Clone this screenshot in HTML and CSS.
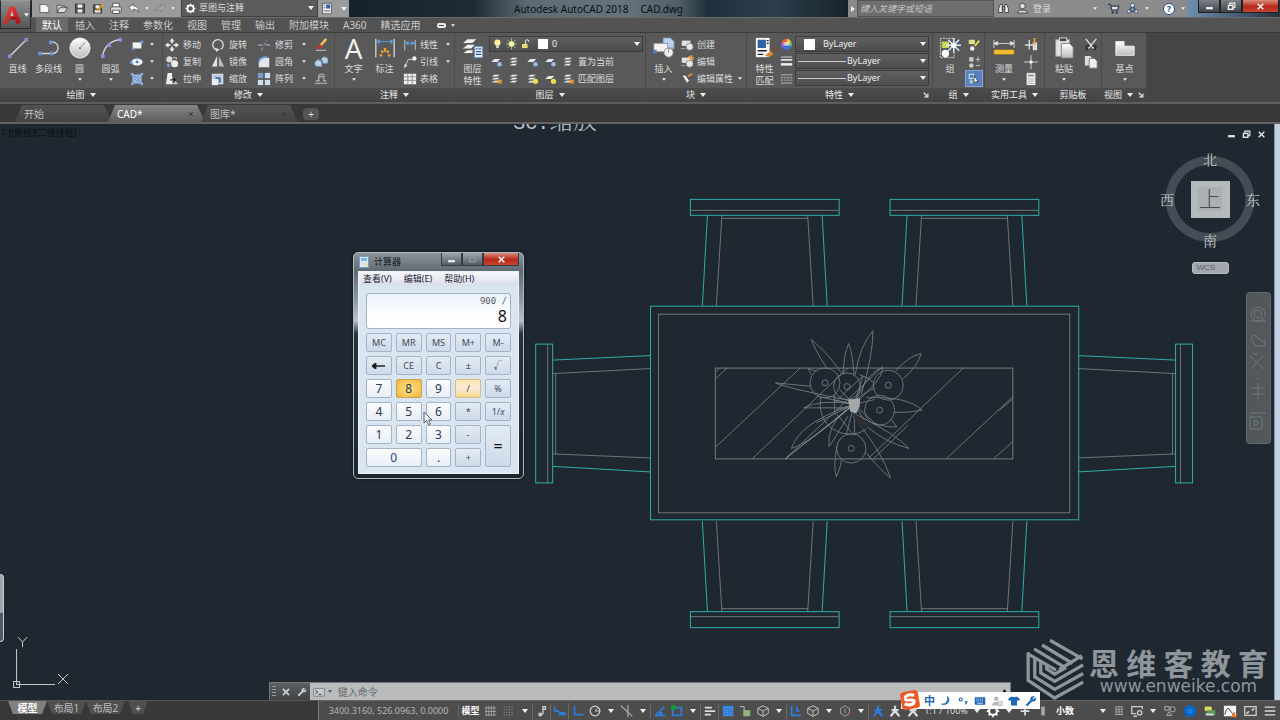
FILE: index.html
```html
<!DOCTYPE html>
<html lang="zh-CN">
<head>
<meta charset="utf-8">
<title>Autodesk AutoCAD 2018 CAD.dwg</title>
<link rel="stylesheet" href="styles.css">
</head>
<body>
<svg class="defs" aria-hidden="true">
  <defs>
    <linearGradient id="gw" x1="0" y1="0" x2="0" y2="1"><stop offset="0" stop-color="#fff"/><stop offset="1" stop-color="#b9bcbe"/></linearGradient>
    <linearGradient id="gred" x1="0" y1="0" x2="1" y2="1"><stop offset="0" stop-color="#f0514a"/><stop offset="1" stop-color="#a3090d"/></linearGradient>
  </defs>
  <symbol id="caret" viewBox="0 0 6 4"><path d="M0 0H6L3 4Z" fill="#eee"/></symbol>
  <symbol id="right" viewBox="0 0 4 6"><path d="M0 0 4 3 0 6Z" fill="#eee"/></symbol>
  <symbol id="logo" viewBox="0 0 20 20"><path d="M1 19 7 2H12L18 17 14 19 12 14H7L5 18Z" fill="url(#gred)"/><path d="M8 11H11L9.500 6Z" fill="#c9cacb"/><path d="M7 14 13 12 12 14Z" fill="#7c0508"/></symbol>
  <symbol id="new" viewBox="0 0 16 16"><path d="M3 3H10L14 7V13H3Z" fill="#f7f7f7" stroke="#555"/></symbol>
  <symbol id="open" viewBox="0 0 16 16"><path d="M2 13V4H6L7 5H12V7M2 13 5 7H15L11 13Z" fill="#ddd" stroke="#3c3c3c"/></symbol>
  <symbol id="save" viewBox="0 0 16 16"><rect x="2.500" y="2.500" width="11" height="11" fill="#4b4f54" stroke="#333"/><rect x="5" y="3" width="6" height="4" fill="#eee"/><rect x="5" y="9" width="6" height="4" fill="#e8e8e8"/></symbol>
  <symbol id="saveas" viewBox="0 0 16 16"><rect x="2.500" y="3.500" width="10" height="10" fill="#4b4f54" stroke="#333"/><rect x="5" y="4" width="5" height="4" fill="#eee"/><rect x="4" y="10" width="7" height="3" fill="#eee"/><path d="M7 11 14 3" stroke="#e6a01e" stroke-width="2.500"/></symbol>
  <symbol id="print" viewBox="0 0 16 16"><rect x="4" y="1.500" width="8" height="5" fill="#fff" stroke="#444"/><rect x="1.500" y="6" width="13" height="6" rx="1" fill="#ddd" stroke="#444"/><rect x="4" y="10" width="8" height="4" fill="#fff" stroke="#444"/></symbol>
  <symbol id="undo" viewBox="0 0 16 16"><path d="M2 7 7 2V5C12 5 14 8 14 13 12 9 10 9 7 9V12Z" fill="#fff" stroke="#555"/></symbol>
  <symbol id="redo" viewBox="0 0 16 16"><path d="M14 7 9 3V6C5 6 3 8 2 12 4 9 6 9 9 9V12Z" fill="#aaa" stroke="#7f7f7f"/></symbol>
  <symbol id="gear" viewBox="0 0 16 16"><circle cx="8" cy="8" r="4.500" fill="none" stroke="#fff" stroke-width="2.500"/><g stroke="#fff" stroke-width="2"><path d="M8 1V4M8 12V15M1 8H4M12 8H15M3 3 5 5M11 11 13 13M13 3 11 5M5 11 3 13"/></g></symbol>
  <symbol id="sheetset" viewBox="0 0 16 16"><rect x="2.500" y="1.500" width="11" height="13" fill="#eef2f7" stroke="#555"/><rect x="7" y="3" width="5" height="5" fill="#2f62a6"/><path d="M4 4H6M4 7H6M4 11H12" stroke="#444"/></symbol>
  <symbol id="bin" viewBox="0 0 16 16"><path d="M4 3H6.500V13H2V8ZM12 3H9.500V13H14V8ZM6.500 6H9.500V9H6.500Z" fill="#eee" stroke="#333"/></symbol>
  <symbol id="user" viewBox="0 0 16 16"><circle cx="8" cy="5" r="3.500" fill="#ddd" stroke="#333"/><path d="M2 13.500C2 10.500 5 10 8 10S14 10.500 14 13.500Z" fill="#ddd" stroke="#333"/></symbol>
  <symbol id="cart" viewBox="0 0 16 16"><path d="M1 3H4L6 10H13L14.500 5H5" fill="#dde" stroke="#2f3b52" stroke-width="1.500"/><circle cx="7" cy="13" r="1.500" fill="#2f3b52"/><circle cx="12" cy="13" r="1.500" fill="#2f3b52"/></symbol>
  <symbol id="a360" viewBox="0 0 16 16"><path d="M8 4 3.500 11.500H12.500Z" fill="none" stroke="#2d4a78" stroke-width="1.500"/><g fill="#dfe7f3" stroke="#2d4a78"><circle cx="8" cy="4" r="2.500"/><circle cx="3.500" cy="11.500" r="2"/><circle cx="12.500" cy="11.500" r="2"/></g></symbol>
  <symbol id="line" viewBox="0 0 24 24"><path d="M3 21 21 3" stroke="#d4d6d8" stroke-width="1.500"/><g fill="#7e8fce"><rect x="1" y="19" width="4" height="4"/><rect x="19" y="1" width="4" height="4"/></g></symbol>
  <symbol id="pline" viewBox="0 0 24 24"><path d="M2 18H17A6 6 0 0 0 14 5.500" fill="none" stroke="#d4d6d8" stroke-width="1.500"/><g fill="#6f8fd6"><rect x="0" y="16" width="4" height="4"/><rect x="13" y="16" width="4" height="4"/><rect x="12" y="4" width="4" height="4"/></g></symbol>
  <symbol id="circle" viewBox="0 0 24 24"><circle cx="12" cy="12" r="11" fill="url(#gw)" stroke="#eee"/><path d="M12 12 18 5" stroke="#888"/><circle cx="12" cy="12" r="1.500" fill="#999"/></symbol>
  <symbol id="arc" viewBox="0 0 24 24"><path d="M3 21C4 11 11 4 22 3" fill="none" stroke="#d4d6d8" stroke-width="1.500"/><g fill="#8e8edb"><rect x="1" y="19" width="4" height="4"/><rect x="8" y="7" width="4" height="4"/><rect x="20" y="1" width="4" height="4"/></g></symbol>
  <symbol id="rect" viewBox="0 0 16 16"><rect x="3" y="5" width="10" height="7" fill="#f2f2f2"/><rect x="2" y="11" width="3" height="3" fill="#7096e0"/><rect x="12" y="3" width="3" height="3" fill="#7096e0"/></symbol>
  <symbol id="ellipse" viewBox="0 0 16 16"><ellipse cx="8" cy="8" rx="6.500" ry="4" fill="#eef"/><circle cx="8" cy="8" r="1.500" fill="#4a6fc2"/><rect x="0" y="7" width="3" height="3" fill="#7096e0"/><rect x="7" y="3" width="3" height="2" fill="#7096e0"/></symbol>
  <symbol id="hatch" viewBox="0 0 16 16"><rect x="3.500" y="3.500" width="9" height="9" fill="#6e97cf" stroke="#cfe0f6"/><path d="M5 11 11 5M5 8 8 5M8 11 11 8" stroke="#cfe0f6"/><g fill="#7fa6ea"><rect x="1" y="1" width="3" height="3"/><rect x="12" y="1" width="3" height="3"/><rect x="1" y="12" width="3" height="3"/><rect x="12" y="12" width="3" height="3"/></g></symbol>
  <symbol id="move" viewBox="0 0 16 16"><path d="M8 0 11 4H9V7H12V5L16 8 12 11V9H9V12H11L8 16 5 12H7V9H4V11L0 8 4 5V7H7V4H5Z" fill="#e8eaec"/><circle cx="8" cy="8" r="2" fill="#53585f"/></symbol>
  <symbol id="rotate" viewBox="0 0 16 16"><path d="M6 13.500A6 6 0 1 1 11 13" fill="none" stroke="#dcdcdc" stroke-width="1.500"/><path d="M5 11 10 13 6 16Z" fill="#dcdcdc"/></symbol>
  <symbol id="trim" viewBox="0 0 16 16"><path d="M1 8H6M10 8H15" stroke="#8fa0b8" stroke-width="1.500"/><path d="M5 14 11 2" stroke="#a8a8a8" stroke-dasharray="4 2"/></symbol>
  <symbol id="erase" viewBox="0 0 16 16"><path d="M2 14H14" stroke="#d8d8d8"/><path d="M5 12 9 7" stroke="#c83232" stroke-width="4"/><path d="M8 8 14 1" stroke="#efc25d" stroke-width="3"/></symbol>
  <symbol id="copy" viewBox="0 0 16 16"><circle cx="5" cy="5" r="3.500" fill="#d9dce2"/><circle cx="11" cy="10" r="4" fill="#eceef0"/><circle cx="4" cy="12" r="2" fill="#7a90d8"/><path d="M9 3H13V5" stroke="#ddd" fill="none"/></symbol>
  <symbol id="mirror" viewBox="0 0 16 16"><path d="M7 1V13H1Z" fill="#e6e6e6"/><path d="M9 1V13H15Z" fill="#b9bdc3"/><path d="M8 0V16" stroke="#60666e"/></symbol>
  <symbol id="fillet" viewBox="0 0 16 16"><path d="M2 14V9C2 4 6 3 14 3V14Z" fill="#e3e6ea"/><path d="M2 9C2 4 6 2 12 2" fill="none" stroke="#6e9be2" stroke-width="2"/></symbol>
  <symbol id="explode" viewBox="0 0 16 16"><path d="M1 8 5 5 9 8V13H3L1 11ZM8 4 12 2 16 4V9L11 10Z" fill="#b7cfe8" stroke="#6d8fb0"/></symbol>
  <symbol id="stretch" viewBox="0 0 16 16"><path d="M3 1H8V14H1Z" fill="#f0f0f0"/><path d="M8 5 15 14H8Z" fill="#bfc4c9"/><path d="M6 9H11M9 7 12 9 9 12" stroke="#222" fill="none" stroke-width="1.500"/></symbol>
  <symbol id="scale" viewBox="0 0 16 16"><rect x="1.500" y="2.500" width="12" height="11" fill="#b9cbe4" stroke="#f0f0f0"/><rect x="1" y="8" width="7" height="7" fill="#e8edf4"/><path d="M10 12V7H5" fill="none" stroke="#3d69b0" stroke-width="2"/></symbol>
  <symbol id="array" viewBox="0 0 16 16"><g fill="#cfe0f4"><rect x="1" y="1" width="6" height="6" fill="#7a9cd0"/><rect x="9" y="1" width="6" height="6"/><rect x="1" y="9" width="6" height="6"/><rect x="9" y="9" width="6" height="6"/></g></symbol>
  <symbol id="offset" viewBox="0 0 16 16"><path d="M1 13H15M2 10H6C2 4 13 3 11 10H14M5 7C5 1 12 1 12 6" fill="none" stroke="#a9a9a9" stroke-width="1.500"/></symbol>
  <symbol id="dim" viewBox="0 0 24 24"><path d="M2 2V22M22 2V22" stroke="#d0d0d0" stroke-width="1.500"/><path d="M3 5H21M3 5 6 3V7ZM21 5 18 3V7Z" stroke="#5b9be8" fill="#5b9be8"/><path d="M6 20H9M8 15 10 17M12 12V16M16 15 14 17M18 20H15" stroke="#f0a02c" stroke-width="2.500"/></symbol>
  <symbol id="linear" viewBox="0 0 16 16"><path d="M2 2V14M14 2V14" stroke="#d0d0d0"/><path d="M3 6H13M3 6 6 4V8ZM13 6 10 4V8Z" fill="#5b9be8" stroke="#5b9be8"/></symbol>
  <symbol id="leader" viewBox="0 0 16 16"><path d="M2 14 6 5H11" fill="none" stroke="#ddd"/><path d="M1 15 2 10 5 12Z" fill="#ddd"/><circle cx="13" cy="4" r="2.500" fill="#eee"/></symbol>
  <symbol id="table" viewBox="0 0 16 16"><rect x="1" y="2" width="14" height="12" fill="#f1f1f1"/><path d="M1 5.500H15M1 9.500H15M5.500 2V14M10.500 2V14" stroke="#858585"/></symbol>
  <symbol id="layers" viewBox="0 0 24 24"><path d="M6 2H17L11 7H0ZM6 8H15L10 13H0ZM6 14H12V18H0Z" fill="#f1f1f1" stroke="#444" stroke-width=".8"/><rect x="13.500" y="10.500" width="9" height="12" fill="#e9f0fa" stroke="#6b8fc0"/><path d="M15 13H17M18 13H21M15 16H21M15 19H21" stroke="#28589e" stroke-width="1.500"/></symbol>
  <symbol id="lay" viewBox="0 0 16 16"><path d="M5 2H13L9 5H1ZM5 6H13L9 9H1ZM5 10H12L9 13H1Z" fill="#e9edf2" stroke="#555" stroke-width=".6"/></symbol>
  <symbol id="lay1" viewBox="0 0 16 16"><path d="M5 4H13L9 8H1Z" fill="#e4e7eb"/></symbol>
  <symbol id="dotb" viewBox="0 0 16 16"><circle cx="12" cy="11" r="3" fill="#9db9e6"/></symbol>
  <symbol id="doty" viewBox="0 0 16 16"><circle cx="12" cy="11" r="3.500" fill="#eadf4e"/></symbol>
  <symbol id="doto" viewBox="0 0 16 16"><rect x="9" y="9" width="6" height="5" fill="#e29a3c"/></symbol>
  <symbol id="bulb" viewBox="0 0 16 16"><circle cx="8" cy="6" r="4.500" fill="#fff3a0"/><rect x="6" y="10" width="4" height="4" fill="#d5d5d5"/></symbol>
  <symbol id="sun" viewBox="0 0 16 16"><path d="M8 0V16M0 8H16M2 2 14 14M14 2 2 14" stroke="#d9d98a"/><circle cx="8" cy="8" r="4" fill="#f5f3a8"/></symbol>
  <symbol id="lock" viewBox="0 0 16 16"><path d="M8 8V4C8 1 13 1 13 5" fill="none" stroke="#ddd" stroke-width="1.500"/><rect x="3" y="8" width="8" height="6" fill="#eadf75"/></symbol>
  <symbol id="insert" viewBox="0 0 24 24"><path d="M11 1H19L23 5V13H11Z" fill="#b7d3ef" stroke="#7392b3"/><rect x="1" y="7" width="15" height="9" fill="#f2f2f2" stroke="#999"/><rect x="0" y="14" width="4" height="4" fill="#5c74c4"/><circle cx="17" cy="17" r="5" fill="#efefef" stroke="#8c8c8c"/><path d="M17 17V12H22" stroke="#8c8c8c" fill="none"/></symbol>
  <symbol id="blk" viewBox="0 0 16 16"><rect x="2" y="3" width="10" height="6" fill="#dfe1e4"/><circle cx="11" cy="10" r="4" fill="#e8e8e8" stroke="#888"/><path d="M1 12H6" stroke="#aaa"/></symbol>
  <symbol id="spark" viewBox="0 0 16 16"><path d="M13 0V7M9 3H16M10 1 15 6" stroke="#f0aa40" stroke-width="1.500"/></symbol>
  <symbol id="attr" viewBox="0 0 16 16"><path d="M2 3 8 13 14 6 10 9 7 4Z" fill="#f0f0f0" stroke="#222" stroke-width=".6"/><path d="M9 5 14 2" stroke="#d98f45" stroke-width="2"/></symbol>
  <symbol id="match" viewBox="0 0 24 24"><rect x="2" y="1" width="15" height="21" fill="#f6f6f6"/><rect x="4" y="3" width="9" height="9" fill="#2f62a6"/><path d="M14 4H16M14 7H16M4 15H14M4 19H10" stroke="#222" stroke-width="1.500"/><path d="M12 20 19 15 21 19 16 22Z" fill="#d98a2a"/><path d="M19 16 24 12" stroke="#8a4a1a" stroke-width="2"/></symbol>
  <symbol id="wheel" viewBox="0 0 16 16"><path d="M8 8V1A7 7 0 0 1 14 5Z" fill="#f4c53b"/><path d="M8 8 14 5A7 7 0 0 1 14 11Z" fill="#5dc25b"/><path d="M8 8 14 11A7 7 0 0 1 2 11Z" fill="#3d74df"/><path d="M8 8 2 11A7 7 0 0 1 2 5Z" fill="#b45ad0"/><path d="M8 8 2 5A7 7 0 0 1 8 1Z" fill="#ec5a3c"/><ellipse cx="8" cy="7" rx="4" ry="2.500" fill="#fff" opacity=".6"/></symbol>
  <symbol id="lw" viewBox="0 0 16 16"><path d="M1 2.500H15" stroke="#eee"/><path d="M1 6H15" stroke="#eee" stroke-width="2"/><path d="M1 11.500H15" stroke="#eee" stroke-width="3"/></symbol>
  <symbol id="lt" viewBox="0 0 16 16"><path d="M1 3.500H15M1 13.500H15" stroke="#ccc"/><path d="M1 7H15M1 10H15" stroke="#ccc" stroke-dasharray="3 1"/></symbol>
  <symbol id="group" viewBox="0 0 24 24"><rect x="1.500" y="1.500" width="15" height="21" fill="none" stroke="#ddd" stroke-dasharray="2 1"/><rect x="3" y="5" width="8" height="7" fill="#c9d75a"/><circle cx="7" cy="18" r="4" fill="#fff"/><path d="M16 1V17M8 9H24M10 3 22 15M22 3 10 15" stroke="#d8f0ff" stroke-width="1.500"/><circle cx="16" cy="9" r="3" fill="#fff"/></symbol>
  <symbol id="ungroup" viewBox="0 0 16 16"><path d="M2 2H9V7H2Z" fill="#dfe08a"/><circle cx="6" cy="12" r="2.500" fill="#eee"/><path d="M9 9 14 3" stroke="#e5e04c" stroke-width="2"/></symbol>
  <symbol id="gedit" viewBox="0 0 16 16"><rect x="2.500" y="2.500" width="5" height="5" fill="#ccc"/><circle cx="5" cy="12" r="2.500" fill="#ccc"/><path d="M10 5H15M12.500 2V8M10 12H15" stroke="#ccc"/></symbol>
  <symbol id="gsel" viewBox="0 0 16 16"><rect x="2.500" y="2.500" width="5" height="5" fill="none" stroke="#cfe"/><circle cx="5" cy="11" r="2.500" fill="#9cc7ae"/><path d="M8 4V13L10 11 13 11Z" fill="#fff" stroke="#345"/></symbol>
  <symbol id="measure" viewBox="0 0 24 24"><path d="M1 3V12M23 3V12M1 7H23M1 7 5 5V9ZM23 7 19 5V9Z" stroke="#ddd" fill="#ddd"/><rect x="1" y="14" width="22" height="5" fill="#f0bc32" stroke="#9c7412" stroke-width=".5"/></symbol>
  <symbol id="qsel" viewBox="0 0 16 16"><path d="M6 2V13M1 8H11" stroke="#ddd" stroke-width="1.500"/><rect x="10" y="5" width="5" height="9" fill="#ddd"/><path d="M12 0V8" stroke="#f3a52a" stroke-width="2"/></symbol>
  <symbol id="pick" viewBox="0 0 16 16"><path d="M8 0V16M0 8H16" stroke="#ddd"/><circle cx="8" cy="8" r="2" fill="#eee"/></symbol>
  <symbol id="calc" viewBox="0 0 16 16"><rect x="3" y="1" width="10" height="14" fill="#e8e8e8"/><rect x="5" y="3" width="6" height="2" fill="#888"/><path d="M5 8H11M5 10.500H11M5 13H11" stroke="#999" stroke-dasharray="1.500 .8"/></symbol>
  <symbol id="paste" viewBox="0 0 24 24"><rect x="3" y="3" width="15" height="18" fill="#e3e3e3" stroke="#999"/><rect x="7" y="1" width="8" height="4" fill="#444" stroke="#ddd"/><path d="M9 7H18L22 11V23H9Z" fill="url(#gw)" stroke="#777"/></symbol>
  <symbol id="cut" viewBox="0 0 16 16"><path d="M2 1 11 12M14 1 5 12" stroke="#ddd" stroke-width="1.500"/><path d="M6 10A2 2 0 1 0 5 13M10 10A2 2 0 1 1 11 13" fill="none" stroke="#222" stroke-width="1.500"/></symbol>
  <symbol id="dup" viewBox="0 0 16 16"><path d="M1 1H7L9 3V12H1Z" fill="#ddd"/><path d="M6 4H12L15 7V15H6Z" fill="#f2f2f2" stroke="#777"/></symbol>
  <symbol id="base" viewBox="0 0 24 24"><path d="M2 5H11V10H22V20H2Z" fill="url(#gw)" stroke="#eee"/></symbol>
  <symbol id="grid" viewBox="0 0 16 16"><path d="M2.500 2V14M5.500 2V14M8.500 2V14M11.500 2V14M1 4.500H14M1 8.500H14M1 12.500H14" stroke="#bbb" opacity=".8"/></symbol>
  <symbol id="dots" viewBox="0 0 16 16"><path d="M2 3.500H14M2 6.500H14M2 9.500H14M2 12.500H14" stroke="#bbb" stroke-dasharray="1 2"/></symbol>
  <symbol id="infer" viewBox="0 0 16 16"><path d="M9 12V3H12V6H9" fill="none" stroke="#ccc" stroke-width="1.500"/><rect x="4" y="10" width="4" height="4" fill="#ccc"/></symbol>
  <symbol id="dyn" viewBox="0 0 16 16"><path d="M2 3V8H7" fill="none" stroke="#2e7bd8" stroke-width="2"/><rect x="6" y="9" width="9" height="4" rx="2" fill="#2e7bd8"/></symbol>
  <symbol id="ortho" viewBox="0 0 16 16"><path d="M4 2V12H14" fill="none" stroke="#2e7bd8" stroke-width="2"/></symbol>
  <symbol id="polar" viewBox="0 0 16 16"><circle cx="8" cy="8" r="5.500" fill="none" stroke="#ccc" stroke-width="1.500"/><path d="M8 8H14M8 8 11 5" stroke="#ccc"/></symbol>
  <symbol id="iso" viewBox="0 0 16 16"><path d="M1 2 14 14M9 1V15" stroke="#a4a4a4" stroke-width="1.500"/></symbol>
  <symbol id="otrack" viewBox="0 0 16 16"><path d="M2 13H14M3 13 13 3" stroke="#2e7bd8" stroke-width="2"/><rect x="7" y="9" width="4" height="4" fill="#2e7bd8"/></symbol>
  <symbol id="osnap" viewBox="0 0 16 16"><rect x="3" y="4" width="10" height="9" fill="none" stroke="#2e7bd8" stroke-width="2"/><circle cx="4" cy="4" r="3" fill="#159a32"/></symbol>
  <symbol id="lwt" viewBox="0 0 16 16"><path d="M2 4H10M2 8H14M2 12H9" stroke="#ddd" stroke-width="2"/></symbol>
  <symbol id="trans" viewBox="0 0 16 16"><rect x="2" y="2" width="12" height="12" fill="#2e7bd8"/><path d="M3 4H14M3 7H14M3 10H14M3 13H14" stroke="#79aee8" stroke-dasharray="1 1"/></symbol>
  <symbol id="cycle" viewBox="0 0 16 16"><path d="M2 3H7V8" fill="none" stroke="#ccc"/><rect x="6" y="7" width="8" height="7" fill="#8fb77b"/></symbol>
  <symbol id="cube" viewBox="0 0 16 16"><path d="M8 2 14 5V11L8 14 2 11V5ZM2 5 8 8 14 5M8 8V14" fill="none" stroke="#ccc"/></symbol>
  <symbol id="ucsb" viewBox="0 0 16 16"><path d="M3 2V13H14M9 3V8H12" fill="none" stroke="#2e7bd8" stroke-width="2"/></symbol>
  <symbol id="gizmo" viewBox="0 0 16 16"><path d="M8 2 13 5V11L8 14 3 11V5Z" fill="none" stroke="#aaa"/><path d="M8 10V5" stroke="#aaa"/><path d="M11 10H14" stroke="#c44"/></symbol>
  <symbol id="ann" viewBox="0 0 16 16"><path d="M8 2V8L3 14M8 8 13 14M4 7H12" fill="none" stroke="currentColor" stroke-width="2.500"/></symbol>
  <symbol id="plus" viewBox="0 0 16 16"><path d="M8 3V13M3 8H13" stroke="#ddd" stroke-width="2"/></symbol>
  <symbol id="bar" viewBox="0 0 16 16"><rect x="6" y="3" width="4" height="10" fill="#aaa"/></symbol>
  <symbol id="sheet" viewBox="0 0 16 16"><path d="M4 3H12M4 6H12M4 9H12M4 12H12M4.500 3V13M8 3V13M11.500 3V13" stroke="#aaa"/></symbol>
  <symbol id="screen" viewBox="0 0 16 16"><path d="M7 11H2V3H14V6M4 14H8" fill="none" stroke="#ccc" stroke-width="1.500"/><circle cx="11" cy="10" r="2.500" fill="none" stroke="#ccc" stroke-width="1.500"/></symbol>
  <symbol id="shapes" viewBox="0 0 16 16"><rect x="2" y="3" width="5" height="4" fill="none" stroke="#bbb"/><circle cx="11" cy="6" r="3" fill="none" stroke="#bbb"/><path d="M4 13 7 9 10 13Z" fill="none" stroke="#bbb"/></symbol>
  <symbol id="blue" viewBox="0 0 16 16"><circle cx="8" cy="8" r="7" fill="#0866c6"/><circle cx="8" cy="8" r="3" fill="#1c7ee0"/></symbol>
  <symbol id="plot" viewBox="0 0 16 16"><rect x="2" y="3" width="8" height="5" fill="#dfe05a"/><rect x="4" y="7" width="10" height="6" fill="#5f9a5a"/><path d="M3 12H12" stroke="#dde" stroke-width="2"/></symbol>
  <symbol id="graph" viewBox="0 0 16 16"><rect x="1" y="2" width="14" height="12" fill="#f4f4f4"/><path d="M2 12Q5 1 8 7T14 10" fill="none" stroke="#333"/><path d="M12 9 16 15H9Z" fill="#e8792a"/></symbol>
  <symbol id="full" viewBox="0 0 16 16"><rect x="2" y="3" width="13" height="10" fill="none" stroke="#ccc" stroke-width="1.500"/><path d="M4 11 7 8.500M13 5 10 7.500" stroke="#ccc" stroke-width="2"/></symbol>
  <symbol id="menu" viewBox="0 0 16 16"><path d="M2 3.500H14M2 8H14M2 12.500H14" stroke="#ddd" stroke-width="1.500"/></symbol>
  <symbol id="wrench" viewBox="0 0 16 16"><path d="M14 14 7 7" stroke="currentColor" stroke-width="3"/><path d="M3 2 6 5 5 6 2 3C0 7 3 9 6 8.500L9 6C9 2 6 1 3 2Z" fill="currentColor"/></symbol>
  <symbol id="x" viewBox="0 0 16 16"><path d="M3 3 13 13M13 3 3 13" stroke="currentColor" stroke-width="2.500"/></symbol>
  <symbol id="min" viewBox="0 0 16 16"><rect x="2" y="9" width="12" height="4" fill="currentColor"/></symbol>
  <symbol id="restore" viewBox="0 0 16 16"><path d="M5 5V2H14V10H11" fill="none" stroke="currentColor" stroke-width="2"/><rect x="2.500" y="6" width="8" height="7" fill="none" stroke="currentColor" stroke-width="2.500"/></symbol>
  <symbol id="max" viewBox="0 0 16 16"><rect x="3" y="4" width="10" height="8" fill="none" stroke="currentColor" stroke-width="2.500"/></symbol>
  <symbol id="launch" viewBox="0 0 8 8"><path d="M1 1 5 5M6.500 2V6.500H2" stroke="#eee" fill="none" stroke-width="1.500"/></symbol>
  <symbol id="prompt" viewBox="0 0 20 16"><rect x="1" y="2" width="18" height="13" rx="1" fill="#c9cdd0" stroke="#7b7f83" stroke-width="1.500"/><path d="M4 5 8 8 4 11M9 12H14" fill="none" stroke="#333" stroke-width="1.500"/></symbol>
</svg>

<div class="app">
  <header class="titlebar">
    <button class="appbtn" aria-label="应用程序菜单"><svg class="logo"><use href="#logo"/></svg><svg class="caret"><use href="#caret"/></svg></button>
    <div class="quick">
      <button aria-label="新建"><svg class="i"><use href="#new"/></svg></button>
      <button aria-label="打开"><svg class="i"><use href="#open"/></svg></button>
      <button aria-label="保存"><svg class="i"><use href="#save"/></svg></button>
      <button aria-label="另存为"><svg class="i"><use href="#saveas"/></svg></button>
      <button aria-label="打印"><svg class="i"><use href="#print"/></svg></button>
      <button aria-label="放弃"><svg class="i"><use href="#undo"/></svg></button>
      <svg class="caret sm"><use href="#caret"/></svg>
      <button aria-label="重做"><svg class="i"><use href="#redo"/></svg></button>
      <svg class="caret sm"><use href="#caret"/></svg>
    </div>
    <div class="workspace">
      <svg class="i"><use href="#gear"/></svg>
      <select aria-label="工作空间"><option>草图与注释</option></select>
      <svg class="caret"><use href="#caret"/></svg>
    </div>
    <div class="quick quick-end"><svg class="i"><use href="#sheetset"/></svg><svg class="caret"><use href="#caret"/></svg></div>
    <h1 class="apptitle"><span>Autodesk AutoCAD 2018</span><span>CAD.dwg</span></h1>
    <button class="expand" aria-label="展开"><svg class="right"><use href="#right"/></svg></button>
    <input class="search" aria-label="搜索" placeholder="键入关键字或短语">
    <div class="account">
      <button aria-label="搜索"><svg class="i"><use href="#bin"/></svg></button>
      <button class="login"><svg class="i"><use href="#user"/></svg>登录</button>
      <svg class="caret sm"><use href="#caret"/></svg>
      <button class="shop" aria-label="商店"><svg class="i"><use href="#cart"/></svg></button>
      <button aria-label="A360"><svg class="i"><use href="#a360"/></svg></button>
      <svg class="caret sm"><use href="#caret"/></svg>
      <button class="help">?</button>
      <svg class="caret sm"><use href="#caret"/></svg>
    </div>
    <div class="winctl">
      <button aria-label="最小化"><svg class="w"><use href="#min"/></svg></button>
      <button aria-label="还原"><svg class="w"><use href="#restore"/></svg></button>
      <button class="close" aria-label="关闭"><svg class="w"><use href="#x"/></svg></button>
    </div>
  </header>

  <nav class="tabs">
    <button class="on">默认</button><button>插入</button><button>注释</button><button>参数化</button><button>视图</button><button>管理</button><button>输出</button><button>附加模块</button><button>A360</button><button>精选应用</button><button class="mode" aria-label="最小化功能区"><span class="cam"></span><svg class="caret sm"><use href="#caret"/></svg></button>
  </nav>

  <div class="ribbon">
    <section class="panel p-draw">
      <div class="body">
        <button class="big"><svg><use href="#line"/></svg><span>直线</span></button>
        <button class="big"><svg><use href="#pline"/></svg><span>多段线</span></button>
        <button class="big"><svg><use href="#circle"/></svg><span>圆</span><svg class="caret sm"><use href="#caret"/></svg></button>
        <button class="big"><svg><use href="#arc"/></svg><span>圆弧</span><svg class="caret sm"><use href="#caret"/></svg></button>
        <div class="col">
          <button class="cmd" aria-label="矩形"><svg class="i"><use href="#rect"/></svg><svg class="caret sm"><use href="#caret"/></svg></button>
          <button class="cmd" aria-label="椭圆"><svg class="i"><use href="#ellipse"/></svg><svg class="caret sm"><use href="#caret"/></svg></button>
          <button class="cmd" aria-label="图案填充"><svg class="i"><use href="#hatch"/></svg><svg class="caret sm"><use href="#caret"/></svg></button>
        </div>
      </div>
      <h2>绘图<svg class="caret"><use href="#caret"/></svg></h2>
    </section>
    <section class="panel p-mod">
      <div class="body">
        <div class="col">
          <button class="cmd"><svg class="i"><use href="#move"/></svg>移动</button>
          <button class="cmd"><svg class="i"><use href="#copy"/></svg>复制</button>
          <button class="cmd"><svg class="i"><use href="#stretch"/></svg>拉伸</button>
        </div>
        <div class="col">
          <button class="cmd"><svg class="i"><use href="#rotate"/></svg>旋转</button>
          <button class="cmd"><svg class="i"><use href="#mirror"/></svg>镜像</button>
          <button class="cmd"><svg class="i"><use href="#scale"/></svg>缩放</button>
        </div>
        <div class="col">
          <button class="cmd"><svg class="i"><use href="#trim"/></svg>修剪<svg class="caret sm"><use href="#caret"/></svg></button>
          <button class="cmd"><svg class="i"><use href="#fillet"/></svg>圆角<svg class="caret sm"><use href="#caret"/></svg></button>
          <button class="cmd"><svg class="i"><use href="#array"/></svg>阵列<svg class="caret sm"><use href="#caret"/></svg></button>
        </div>
        <div class="col">
          <button class="cmd" aria-label="删除"><svg class="i"><use href="#erase"/></svg></button>
          <button class="cmd" aria-label="分解"><svg class="i"><use href="#explode"/></svg></button>
          <button class="cmd" aria-label="偏移"><svg class="i"><use href="#offset"/></svg></button>
        </div>
      </div>
      <h2>修改<svg class="caret"><use href="#caret"/></svg></h2>
    </section>
    <section class="panel p-ann">
      <div class="body">
        <button class="big"><b class="bigA">A</b><span>文字</span><svg class="caret sm"><use href="#caret"/></svg></button>
        <button class="big"><svg><use href="#dim"/></svg><span>标注</span></button>
        <div class="col">
          <button class="cmd"><svg class="i"><use href="#linear"/></svg>线性<svg class="caret sm"><use href="#caret"/></svg></button>
          <button class="cmd"><svg class="i"><use href="#leader"/></svg>引线<svg class="caret sm"><use href="#caret"/></svg></button>
          <button class="cmd"><svg class="i"><use href="#table"/></svg>表格</button>
        </div>
      </div>
      <h2>注释<svg class="caret"><use href="#caret"/></svg></h2>
    </section>
    <section class="panel p-lay">
      <div class="body">
        <button class="big"><svg><use href="#layers"/></svg><span>图层<br>特性</span></button>
        <div class="col grow">
          <div class="combo layercombo"><svg class="i"><use href="#bulb"/></svg><svg class="i"><use href="#sun"/></svg><svg class="i"><use href="#lock"/></svg><i class="sw"></i><select aria-label="图层"><option>0</option></select><svg class="caret"><use href="#caret"/></svg></div>
          <div class="iconrow">
            <svg class="i"><use href="#lay1"/><use href="#dotb"/></svg><svg class="i"><use href="#lay"/></svg><svg class="i"><use href="#lay1"/><use href="#dotb"/></svg><svg class="i"><use href="#lay1"/><use href="#dotb"/></svg><button class="cmd"><svg class="i"><use href="#lay"/></svg>置为当前</button>
          </div>
          <div class="iconrow">
            <svg class="i"><use href="#lay"/><use href="#doto"/></svg><svg class="i"><use href="#lay"/></svg><svg class="i"><use href="#lay"/><use href="#doty"/></svg><svg class="i"><use href="#lay1"/><use href="#doty"/></svg><button class="cmd"><svg class="i"><use href="#lay"/><use href="#doto"/></svg>匹配图层</button>
          </div>
        </div>
      </div>
      <h2>图层<svg class="caret"><use href="#caret"/></svg></h2>
    </section>
    <section class="panel p-blk">
      <div class="body">
        <button class="big"><svg><use href="#insert"/></svg><span>插入</span><svg class="caret sm"><use href="#caret"/></svg></button>
        <div class="col">
          <button class="cmd"><svg class="i"><use href="#blk"/></svg>创建</button>
          <button class="cmd"><svg class="i"><use href="#blk"/><use href="#spark"/></svg>编辑</button>
          <button class="cmd"><svg class="i"><use href="#attr"/></svg>编辑属性<svg class="caret sm"><use href="#caret"/></svg></button>
        </div>
      </div>
      <h2>块<svg class="caret"><use href="#caret"/></svg></h2>
    </section>
    <section class="panel p-prop">
      <div class="body">
        <button class="big"><svg><use href="#match"/></svg><span>特性<br>匹配</span></button>
        <div class="col">
          <svg class="i row"><use href="#wheel"/></svg><svg class="i row"><use href="#lw"/></svg><svg class="i row"><use href="#lt"/></svg>
        </div>
        <div class="col grow">
          <div class="combo"><i class="sw"></i><select aria-label="颜色"><option>ByLayer</option></select><svg class="caret"><use href="#caret"/></svg></div>
          <div class="combo"><i class="ln"></i><select aria-label="线宽"><option>ByLayer</option></select><svg class="caret"><use href="#caret"/></svg></div>
          <div class="combo"><i class="ln"></i><select aria-label="线型"><option>ByLayer</option></select><svg class="caret"><use href="#caret"/></svg></div>
        </div>
      </div>
      <h2>特性<svg class="caret"><use href="#caret"/></svg><svg class="launch far"><use href="#launch"/></svg></h2>
    </section>
    <section class="panel p-grp">
      <div class="body">
        <button class="big"><svg><use href="#group"/></svg><span>组</span></button>
        <div class="col">
          <button class="cmd" aria-label="取消编组"><svg class="i"><use href="#ungroup"/></svg></button>
          <button class="cmd" aria-label="组编辑"><svg class="i"><use href="#gedit"/></svg></button>
          <button class="cmd active" aria-label="启用组选择"><svg class="i"><use href="#gsel"/></svg></button>
        </div>
      </div>
      <h2>组<svg class="caret"><use href="#caret"/></svg></h2>
    </section>
    <section class="panel p-util">
      <div class="body">
        <button class="big"><svg><use href="#measure"/></svg><span>测量</span><svg class="caret sm"><use href="#caret"/></svg></button>
        <div class="col">
          <button class="cmd" aria-label="快速选择"><svg class="i"><use href="#qsel"/></svg></button>
          <button class="cmd" aria-label="点坐标"><svg class="i"><use href="#pick"/></svg></button>
          <button class="cmd" aria-label="计算器"><svg class="i"><use href="#calc"/></svg></button>
        </div>
      </div>
      <h2>实用工具<svg class="caret"><use href="#caret"/></svg></h2>
    </section>
    <section class="panel p-clip">
      <div class="body">
        <button class="big"><svg><use href="#paste"/></svg><span>粘贴</span><svg class="caret sm"><use href="#caret"/></svg></button>
        <div class="col">
          <button class="cmd" aria-label="剪切"><svg class="i"><use href="#cut"/></svg></button>
          <button class="cmd" aria-label="复制剪裁"><svg class="i"><use href="#dup"/></svg></button>
        </div>
      </div>
      <h2>剪贴板</h2>
    </section>
    <section class="panel p-view">
      <div class="body">
        <button class="big"><svg><use href="#base"/></svg><span>基点</span><svg class="caret sm"><use href="#caret"/></svg></button>
      </div>
      <h2>视图<svg class="caret"><use href="#caret"/></svg><svg class="launch"><use href="#launch"/></svg></h2>
    </section>
  </div>

  <div class="docs">
    <button class="doc">开始</button>
    <button class="doc on">CAD*<svg class="dx"><use href="#x"/></svg></button>
    <button class="doc">图库*<svg class="dx"><use href="#x"/></svg></button>
    <button class="add" aria-label="新图形">+</button>
  </div>

  <main class="canvas">
    <svg class="drawing" viewBox="0 124 1274 577" preserveAspectRatio="xMidYMin meet">
      <defs>
        <g id="chairT" fill="none">
          <g stroke="#6d757b"><path d="M690 210.500H839M721.500 218.500H808.500M722 216 716.500 306M808 216 813.500 306"/></g>
          <g stroke="#2fada9"><rect x="690.500" y="199.500" width="149" height="16"/><path d="M707.500 216 702.500 306M822.500 216 827.500 306"/></g>
        </g>
        <g id="chairL" fill="none">
          <g stroke="#6d757b"><path d="M547.500 345V484M555.500 374V455M553 374 650 369M553 454.500 650 458.500"/></g>
          <g stroke="#2fada9"><rect x="535.500" y="344.500" width="17" height="139"/><path d="M553 360.500 650 356M553 467 650 472.500"/></g>
        </g>
      </defs>
      <text class="note" x="513" y="129"><tspan class="mono">SC:</tspan>缩放</text>
      <text class="vp" x="1" y="136">[-][俯视][二维线框]</text>
      <use href="#chairT"/><use href="#chairT" x="200"/>
      <use href="#chairT" transform="matrix(1 0 0 -1 0 828)"/><use href="#chairT" transform="matrix(1 0 0 -1 200 828)"/>
      <use href="#chairL"/><use href="#chairL" transform="matrix(-1 0 0 1 1729 0)"/>
      <g fill="none"><rect x="650.500" y="306.500" width="429" height="214" stroke="#2fada9"/><rect x="658.500" y="314.500" width="412" height="199" stroke="#6d757b"/></g>
      <rect x="715.500" y="368.500" width="298" height="91" fill="none" stroke="#747c82"/>
      <g transform="translate(700 320) scale(.33333)" fill="none" stroke="#7b848a" stroke-width="2.400">
        <path d="M302 145 47 383M445 145 157 418M550 140 257 418M792 145 505 418M625 318 522 418M941 231 740 418M941 366 883 418M941 238 900 272M60 145 47 158M82 145 47 178"/>
        <path d="M380 143Q345 90 335 60 385 100 425 160M430 160Q435 95 447 72 460 105 463 165M467 165Q480 80 520 33 520 110 485 225M588 155Q625 110 665 102 655 140 610 178M332 200 227 190Q260 205 445 242M500 235Q620 228 668 272 630 280 585 279M500 320Q560 370 628 387 590 345 470 285M500 400Q540 450 573 476 550 400 460 290M412 380Q400 440 410 472 425 440 425 420M275 387Q300 310 450 260 M275 387Q330 370 450 265M440 270Q380 320 388 382 410 350 445 290M312 265Q360 240 450 252M312 265 450 265M520 310Q560 325 592 322L575 300M335 165 325 147 350 155"/>
        <path d="M470 240Q510 150 550 145 545 190 470 240M480 165Q510 175 522 190M480 240Q500 215 525 205M463 255 400 240M463 255 405 300M463 255 440 345M463 255 465 345M463 255 420 210M463 255 525 240M463 255 500 310M463 255 410 270M463 255 530 315M463 255 490 170M463 255 360 232M463 255 350 310M405 250 440 215 490 170M363 235A90 90 0 0 0 500 330M405 225V280Q430 300 455 340"/>
        <path d="M257 418 460 258" stroke="#a3a9ad"/>
        <circle cx="376" cy="190" r="45"/><circle cx="376" cy="190" r="9"/><circle cx="442" cy="200" r="40"/><circle cx="442" cy="201" r="9"/><circle cx="566" cy="197" r="45"/><circle cx="566" cy="197" r="9"/><circle cx="540" cy="272" r="45"/><circle cx="540" cy="272" r="9"/><circle cx="455" cy="387" r="44"/><circle cx="455" cy="387" r="9"/>
        <path d="M462 284 520 315 490 330 465 300Z" fill="#2e2d30" stroke="none"/><path d="M445 240 482 236 480 262 470 282 452 276Z" fill="#a5a8a9" stroke="none"/>
      </g>
      <g fill="none" stroke="#c6cccf"><path d="M15.500 650V686M15 685.500H54"/><rect x="12.500" y="682.500" width="6" height="6"/><path d="M17 638 21.500 643 26 638M21.500 643V648M57 675 67 685M67 675 57 685"/></g>
    </svg>
    <div class="edge"></div>
    <div class="mdi"><button aria-label="最小化图形"><svg class="w"><use href="#min"/></svg></button><button aria-label="还原图形"><svg class="w"><use href="#restore"/></svg></button><button aria-label="关闭图形"><svg class="w"><use href="#x"/></svg></button></div>
    <div class="sidetab"></div>

    <div class="viewcube">
      <svg class="cube" viewBox="0 0 106 104">
        <ellipse cx="53" cy="50" rx="40" ry="38.500" fill="none" stroke="#444d55" stroke-width="9"/>
        <rect x="34" y="32" width="39" height="37" fill="#b4b9bb"/><rect x="41" y="38" width="24" height="24" fill="#abb0b3"/>
        <text class="top" x="53" y="58">上</text>
        <g class="dir"><text x="53" y="16">北</text><text x="53" y="97">南</text><text x="10" y="56">西</text><text x="96" y="56">东</text></g>
      </svg>
      <button class="wcs">WCS</button>
    </div>
    <svg class="navbar" viewBox="0 0 25 152">
      <rect x=".5" y=".5" width="24" height="151" rx="3" fill="#52575a" stroke="#62686b"/>
      <g fill="none" stroke="#6f7880"><circle cx="12" cy="22" r="7"/><circle cx="12" cy="22" r="4"/><path d="M4 29H20M12 36V37M5 46Q8 41 12 46T19 48V54H9ZM4 64 18 77M17 64 5 77M7 62H12M12 86V87M12 91V107M5 96H19M5 102H19M12 112V113M4 121H20M4 125H16V137H4ZM8 128 13 131 8 134Z"/></g>
    </svg>

    <div class="calc">
      <div class="calc-title">
        <svg class="ci" viewBox="0 0 10 12"><rect x=".5" y=".5" width="9" height="11" fill="#d8e8f4" stroke="#7f9db6"/><rect x="2" y="2" width="6" height="3" fill="#7db3df"/><rect x="5" y="7" width="3" height="3" fill="#e8d9a8"/></svg>
        <span>计算器</span>
        <div class="calc-ctl"><button aria-label="最小化计算器"><svg class="w"><use href="#min"/></svg></button><button disabled aria-label="最大化计算器"><svg class="w"><use href="#max"/></svg></button><button class="close" aria-label="关闭计算器"><svg class="w"><use href="#x"/></svg></button></div>
      </div>
      <div class="calc-client">
        <div class="calc-menu"><button>查看(V)</button><button>编辑(E)</button><button>帮助(H)</button></div>
        <output class="display"><span class="expr">900 /</span><span class="val">8</span></output>
        <div class="keys">
          <button>MC</button><button>MR</button><button>MS</button><button>M+</button><button>M-</button>
          <button aria-label="退格"><svg class="back" viewBox="0 0 14 6"><path d="M0 3 4 0V6ZM3 3H14" stroke="#222" stroke-width="1.500"/></svg></button><button>CE</button><button>C</button><button>±</button><button>√</button>
          <button class="n">7</button><button class="n hot">8</button><button class="n">9</button><button class="warmkey">/</button><button>%</button>
          <button class="n">4</button><button class="n">5</button><button class="n">6</button><button>*</button><button>1/<i>x</i></button>
          <button class="n">1</button><button class="n">2</button><button class="n">3</button><button>-</button><button class="eq">=</button>
          <button class="n zero">0</button><button class="n">.</button><button>+</button>
        </div>
      </div>
      <svg class="cursor" viewBox="0 0 10 15"><path d="M1 1V12L3.500 9.500 6 14 7.500 13 5.500 9H9Z" fill="#eef2f6" stroke="#5b6570"/></svg>
    </div>

    <div class="watermark">
      <svg class="mark" viewBox="0 0 174 184"><g fill="none" stroke="#8e969b" stroke-width="10"><path d="M72 4 170 60M48 18 140 74M24 30 114 84M4 44 90 94"/><path d="M6 40V125L86 178 172 130M26 56V114L86 152 172 104M44 66V102L86 128 172 78M62 76V90L86 106 120 86M168 50 100 92"/></g></svg>
      <div class="wtext"><p class="cn">恩维客教育</p><p class="url">www.enweike.com</p></div>
    </div>

    <div class="cmdline">
      <i class="grip"></i>
      <button aria-label="关闭命令行"><svg class="i"><use href="#x"/></svg></button>
      <button aria-label="自定义"><svg class="i flip"><use href="#wrench"/></svg></button>
      <label class="cmdbox"><svg class="prompt"><use href="#prompt"/></svg><svg class="caret sm dark" viewBox="0 0 6 4"><path d="M0 0H6L3 4Z"/></svg><input aria-label="命令" placeholder="键入命令"><svg class="up" viewBox="0 0 6 4"><path d="M0 4H6L3 0Z"/></svg></label>
    </div>
  </main>

  <footer class="status">
    <div class="layouts"><button class="on">模型</button><button>布局1</button><button>布局2</button><button class="ladd" aria-label="新布局">+</button></div>
    <div class="tray">
      <span class="coords">3400.3160, 526.0963, 0.0000</span>
      <button class="model">模型</button>
      <button class="s" aria-label="栅格"><svg class="i"><use href="#grid"/></svg></button><button class="s" aria-label="捕捉"><svg class="i"><use href="#dots"/></svg></button><span class="c"><svg class="caret"><use href="#caret"/></svg></span>
      <button class="s sep" aria-label="推断约束"><svg class="i"><use href="#infer"/></svg></button><button class="s sep" aria-label="动态输入"><svg class="i"><use href="#dyn"/></svg></button><button class="s sep" aria-label="正交"><svg class="i"><use href="#ortho"/></svg></button><button class="s" aria-label="极轴"><svg class="i"><use href="#polar"/></svg></button><span class="c"><svg class="caret"><use href="#caret"/></svg></span>
      <button class="s" aria-label="等轴测"><svg class="i"><use href="#iso"/></svg></button><span class="c"><svg class="caret"><use href="#caret"/></svg></span>
      <button class="s sep" aria-label="对象追踪"><svg class="i"><use href="#otrack"/></svg></button><button class="s" aria-label="对象捕捉"><svg class="i"><use href="#osnap"/></svg></button><span class="c"><svg class="caret"><use href="#caret"/></svg></span>
      <button class="s sep" aria-label="线宽"><svg class="i"><use href="#lwt"/></svg></button><button class="s sep" aria-label="透明度"><svg class="i"><use href="#trans"/></svg></button><button class="s" aria-label="选择循环"><svg class="i"><use href="#cycle"/></svg></button><button class="s" aria-label="三维捕捉"><svg class="i"><use href="#cube"/></svg></button><span class="c"><svg class="caret"><use href="#caret"/></svg></span>
      <button class="s sep" aria-label="动态 UCS"><svg class="i"><use href="#ucsb"/></svg></button><button class="s" aria-label="选择过滤"><svg class="i"><use href="#cube"/></svg></button><span class="c"><svg class="caret"><use href="#caret"/></svg></span>
      <button class="s" aria-label="小控件"><svg class="i"><use href="#gizmo"/></svg></button><span class="c"><svg class="caret"><use href="#caret"/></svg></span>
      <button class="s sep blue" aria-label="注释可见性"><svg class="i"><use href="#ann"/></svg></button><button class="s" aria-label="自动缩放"><svg class="i"><use href="#ann"/></svg></button><button class="s" aria-label="注释比例"><svg class="i"><use href="#ann"/></svg></button>
      <button class="zoom">1:1 / 100%</button><span class="c"><svg class="caret"><use href="#caret"/></svg></span>
      <button class="s" aria-label="切换工作空间"><svg class="i"><use href="#gear"/></svg></button><span class="c"><svg class="caret"><use href="#caret"/></svg></span>
      <button class="s" aria-label="注释监视器"><svg class="i"><use href="#plus"/></svg></button><button class="s" aria-label="单位"><svg class="i"><use href="#bar"/></svg></button>
      <label class="units"><select aria-label="单位格式"><option>小数</option></select><svg class="caret"><use href="#caret"/></svg></label>
      <button class="s" aria-label="快捷特性"><svg class="i"><use href="#sheet"/></svg></button><button class="s" aria-label="锁定界面"><svg class="i"><use href="#screen"/></svg></button><span class="c"><svg class="caret"><use href="#caret"/></svg></span>
      <button class="s l" aria-label="隔离对象"><svg class="i"><use href="#shapes"/></svg></button><button class="s l" aria-label="硬件加速"><svg class="i"><use href="#blue"/></svg></button><button class="s l" aria-label="打印通知"><svg class="i"><use href="#plot"/></svg></button><button class="s l" aria-label="性能"><svg class="i"><use href="#graph"/></svg></button><button class="s l" aria-label="全屏显示"><svg class="i"><use href="#full"/></svg></button><button class="s l" aria-label="自定义状态栏"><svg class="i"><use href="#menu"/></svg></button>
    </div>
  </footer>

  <div class="ime">
    <svg class="sogou" viewBox="0 0 22 22"><g transform="rotate(-10 11 11)"><rect x="2" y="2" width="18" height="18" rx="3" fill="#ec5a25"/><path d="M16 7C10 4 5 7 7 10 9 12 15 10 15 13 14 17 8 16 5 14" fill="none" stroke="#fff" stroke-width="3"/></g></svg>
    <button>中</button>
    <svg class="i" viewBox="0 0 16 16"><path d="M10 2C15 7 10 15 2 12 8 13 11 8 10 2Z" fill="#1c68b8" stroke="#1c68b8"/></svg>
    <svg class="i" viewBox="0 0 16 16"><circle cx="5" cy="6" r="2" fill="none" stroke="#1c68b8" stroke-width="1.500"/><path d="M11 8H14Q14 12 10 13 12 11 11 8Z" fill="#1c68b8"/></svg>
    <svg class="i" viewBox="0 0 16 16"><rect x="1" y="3" width="14" height="10" rx="1" fill="#1c68b8"/><path d="M3 5.500H13M3 8H13" stroke="#fff" stroke-dasharray="1.500 1"/><path d="M4 11H12" stroke="#fff"/></svg>
    <svg class="i" viewBox="0 0 16 16"><circle cx="7" cy="5" r="3" fill="#b8b8b8"/><path d="M1 14Q2 9 7 9T13 14Z" fill="#b8b8b8"/><rect x="9" y="9" width="6" height="5" fill="#ddd" stroke="#b8b8b8"/></svg>
    <svg class="i" viewBox="0 0 16 16"><path d="M5 2Q8 4 11 2L16 5 14 8 12 7V14H4V7L2 8 0 5Z" fill="#1c68b8"/></svg>
    <svg class="i flip" viewBox="0 0 16 16"><use href="#wrench"/></svg>
  </div>
</div>
</body>
</html>
```
FILE: styles.css
```css
* { box-sizing: border-box; }
html, body { height: 100%; margin: 0; }
body {
  font-family: "Noto Sans", "Noto Sans CJK SC", sans-serif;
  font-size: 9px;
  line-height: 12px;
  color: #dcdddd;
  background: #1f2830;
  overflow: hidden;
}
button, input, select {
  font: inherit; color: inherit; margin: 0; padding: 0; border: 0;
  background: none; appearance: none; outline: none;
}
button { display: flex; align-items: center; justify-content: center; white-space: nowrap; }
h1, h2, p { margin: 0; font-weight: 400; }
svg { flex: none; display: block; }
.defs { position: absolute; width: 0; height: 0; }
.i { width: 14px; height: 14px; }
.w { width: 9px; height: 9px; }
.flip { transform: scaleX(-1); }
.caret { width: 6px; height: 4px; }
.caret.sm { width: 4px; height: 3px; }
.app { position: relative; height: 100vh; display: flex; flex-direction: column; }

/* title bar */
.titlebar { position: relative; display: flex; height: 17px; padding-left: 32px; background: #1b2833; flex: none; }
.appbtn {
  position: absolute; left: 0; top: 0; z-index: 2; width: 31px; height: 29px; gap: 1px;
  background: linear-gradient(#8f8f8f, #555); border: 1px solid #2c2c2c; border-top-color: #999;
}
.appbtn .logo { width: 21px; height: 22px; }
.appbtn .caret { width: 5px; }
.quick { display: flex; align-items: center; gap: 4px; width: 149px; padding-left: 5px; background: #9b9b9b; }
.quick .i { width: 14px; height: 13px; }
.quick-end { width: 31px; gap: 7px; padding-left: 2px; }
.workspace {
  display: flex; align-items: center; width: 137px; gap: 3px; padding: 0 3px;
  background: #5b5b5b; border: 1px solid #3f3f3f; border-top: 0;
}
.workspace .i { width: 11px; height: 11px; }
.workspace select { flex: 1; min-width: 0; }
.apptitle {
  flex: 1; display: flex; justify-content: center; align-items: center; gap: 12px; font-size: 10px;
  color: #0a0e12; background: linear-gradient(90deg, #14222b, #1d2c36 25%, #5d6b75 36%, #66737c 55%, #4f5e68 66%, #1d2f3a 72%, #2c3f4b 85%, #17232c);
}
.expand { width: 9px; background: #8a8a8a; }
.right { width: 4px; height: 6px; }
.search { width: 137px; background: #6e6e6e; border: 1px solid #555; padding: 0 2px; font-style: italic; }
.search::placeholder { color: #c4c4c4; opacity: 1; }
.account { display: flex; align-items: center; width: 193px; padding-left: 3px; background: #8b8b8b; gap: 6px; }
.account .i { width: 13px; height: 13px; }
.login { gap: 4px; margin-right: 36px; }
.shop { margin-left: 4px; }
.help { width: 12px; height: 12px; border-radius: 50%; background: #fff; border: 1px solid #24508f; color: #24508f; font-weight: 700; margin-left: 8px; }
.winctl { display: flex; align-items: flex-start; width: 93px; padding-left: 11px; background: linear-gradient(90deg, #6f8fae, #26323c); color: #eef2f5; }
.winctl button { height: 13px; width: 22px; background: linear-gradient(#7b8186, #3d4347); border: 1px solid #1d2226; border-top: 0; }
.winctl .close { width: 37px; }
.close, .winctl .close { background: linear-gradient(#d98a7c, #b8281a 55%, #c8452f); color: #fff; }

/* ribbon */
.tabs { display: flex; height: 15px; flex: none; padding-left: 36px; background: #535353; color: #c9c9c9; font-size: 10px; border-top: 1px solid #6a6a6a; }
.tabs button { padding: 0 7px; }
.tabs button:first-child { padding: 0 6px; }
.tabs .on { background: #6b6b6b; color: #fff; }
.tabs .mode { gap: 5px; margin-left: 2px; }
.cam { width: 9px; height: 5px; border: 2px solid #eee; border-radius: 2px; background: #444; }
.ribbon { display: flex; height: 72px; flex: none; background: #454545; border-top: 1px solid #3b3b3b; border-bottom: 2px solid #5e5e5e; }
.panel { display: flex; flex-direction: column; border-right: 1px solid #4a4a4a; background: #595959; flex: none; }
.panel .body { flex: 1; display: flex; padding: 3px 0 0 2px; }
.panel h2 { display: flex; justify-content: center; align-items: center; gap: 5px; height: 14px; background: linear-gradient(#4c4c4c, #434343); font-size: 9px; color: #e8e8e8; }
.launch { width: 6px; height: 6px; }
.p-draw { width: 163px; } .p-mod { width: 172px; } .p-ann { width: 120px; } .p-lay { width: 191px; }
.p-blk { width: 101px; } .p-prop { width: 186px; } .p-grp { width: 52px; } .p-util { width: 60px; }
.p-clip { width: 57px; } .p-view { width: 45px; }
.p-prop h2 { position: relative; }
.p-prop .far { position: absolute; right: 3px; }
.panel .body .big { justify-content: flex-start; }
.big { flex-direction: column; width: 31px; gap: 3px; line-height: 12px; text-align: center; }
.big > svg:first-child { width: 22px; height: 24px; }
.bigA { height: 24px; font-size: 28px; line-height: 24px; font-weight: 400; font-family: "Open Sans", sans-serif; color: #f2f2f2; }
.col { display: flex; flex-direction: column; align-items: flex-start; }
.col.grow { flex: 1; min-width: 0; align-items: stretch; }
.cmd { height: 17px; gap: 4px; }
.cmd .caret { margin-left: 5px; }
.p-draw .col { padding-left: 4px; }
.p-draw .cmd .caret { margin-left: 2px; }
.p-mod .col { width: 46px; }
.p-mod .col:nth-child(3) { width: 57px; }
.p-mod .col:last-child { width: 14px; }
.p-ann .body { padding-left: 3px; }
.p-ann .col { padding-left: 3px; }
.p-ann .cmd { gap: 3px; }
.p-lay .col { padding-left: 1px; }
.p-blk .col { padding-left: 1px; }
.p-blk .cmd { gap: 3px; }
.p-blk .cmd .caret { margin-left: 2px; }
.p-prop .col + .col { padding: 0 3px 0 2px; }
.p-grp .big { width: 30px; }
.p-grp .cmd { width: 18px; }
.p-util .big { width: 34px; } .p-util .col { padding-left: 3px; }
.p-clip .big { width: 34px; } .p-clip .col { padding-left: 3px; }
.p-view .big { width: 41px; }
.i.row { width: 13px; height: 13px; margin: 2px 0; }
.active { background: #5b7fc0; border: 1px solid #87a4d6; }
.combo { display: flex; align-items: center; height: 16px; margin-bottom: 1px; padding: 0 2px; background: linear-gradient(#5f5f5f, #4e4e4e); border: 1px solid #3c3c3c; }
.combo select { flex: 1; min-width: 0; font-size: 9px; color: #eee; }
.combo .sw { width: 11px; height: 11px; background: #fff; margin: 0 8px 0 6px; }
.combo .ln { width: 48px; height: 1px; background: #ccc; margin-right: 1px; }
.layercombo { margin-right: 2px; }
.layercombo .i { width: 11px; height: 12px; margin-right: 3px; }
.layercombo .sw { width: 10px; height: 10px; margin: 0 4px; }
.iconrow { display: flex; align-items: center; height: 17px; gap: 5px; padding-left: 1px; }
.iconrow .i { width: 13px; height: 12px; }
.iconrow .cmd { gap: 3px; }

/* file tabs */
.docs { display: flex; align-items: center; height: 20px; flex: none; padding: 1px 0 0 15px; background: #383838; border-bottom: 2px solid #636363; font-size: 10px; }
.doc { justify-content: space-between; width: 97px; height: 17px; margin-right: -4px; padding: 0 11px 0 9px; background: linear-gradient(#525252, #444); color: #c0c0c0; clip-path: polygon(7px 0, calc(100% - 8px) 0, 100% 100%, 0 100%); }
.doc.on { background: linear-gradient(#868686, #5c5c5c); color: #fff; }
.dx { width: 6px; height: 6px; color: #333; }
.add { width: 16px; height: 12px; margin-left: 9px; border-radius: 4px; background: #555; color: #ddd; }

/* drawing area */
.canvas { position: relative; flex: 1; min-height: 0; display: flex; background: #1f2830; }
.drawing { flex: 1; min-width: 0; height: 100%; }
.edge { width: 6px; background: #c3d2e2; border-left: 1px solid #8797a8; }
.note { font: 24px "Noto Serif CJK SC", "Noto Sans CJK SC", sans-serif; font-weight: 300; fill: #bcc3c8; }
.mono { font-family: "Liberation Mono", monospace; font-size: 20px; }
.vp { font-size: 9px; fill: #0a0f13; }
.mdi { position: absolute; right: 14px; top: 6px; display: flex; gap: 6px; color: #e4e6e8; }
.sidetab { position: absolute; left: 0; bottom: 58px; width: 4px; height: 68px; border: 1px solid #c5ced4; border-left: 0; border-radius: 0 4px 4px 0; background: linear-gradient(#9ba6ad 58%, #4c5b6b 58%); }
.viewcube { position: absolute; right: 17px; top: 25px; display: flex; flex-direction: column; align-items: center; gap: 9px; }
.cube { width: 106px; height: 104px; }
.cube text { text-anchor: middle; }
.dir { font: 14px "Noto Serif CJK SC", "Noto Sans CJK SC", sans-serif; fill: #c2c7ca; }
.top { font: 22px "Noto Sans CJK SC", sans-serif; font-weight: 300; fill: #454b54; }
.wcs { justify-content: flex-start; width: 37px; height: 12px; padding-left: 4px; border-radius: 3px; background: #a1a7ac; border: 1px solid #b8bdc1; color: #59616a; font-family: "Liberation Sans", sans-serif; font-size: 8px; }
.navbar { position: absolute; right: 9px; top: 168px; width: 25px; height: 152px; }

/* calculator */
.calc {
  position: absolute; left: 353px; top: 128px; width: 171px; padding: 0 4px 4px;
  background: linear-gradient(#8b949b, #606a72 8%, #8a949c 20%, #b9c2c8 30%, #28323b 36%, #1d262e); border: 1px solid #b0b9c0; border-radius: 5px; box-shadow: 0 0 3px #0b1116; color: #1c2430;
}
.calc-title { display: flex; align-items: center; gap: 5px; height: 18px; padding-left: 1px; }
.calc-title span { flex: 1; color: #0c1014; }
.ci { width: 10px; height: 12px; }
.calc-ctl { display: flex; align-self: flex-start; color: #e9edf0; }
.calc-ctl button { width: 21px; height: 13px; background: linear-gradient(#9da5ab, #525c64); border: 1px solid #343d45; border-top: 0; }
.calc-ctl button:disabled { color: #8b949b; }
.calc-ctl .close { width: 36px; background: linear-gradient(#d98a7c, #b8281a 55%, #c8452f); color: #fff; }
.calc-client { background: #dae5f2; border: 1px solid #eef3f8; padding-bottom: 6px; }
.calc-menu { display: flex; gap: 12px; height: 14px; padding-left: 4px; background: linear-gradient(#f6f7fb, #d9ddec); }
.display { display: flex; flex-direction: column; align-items: flex-end; height: 36px; margin: 7px 7px 4px; padding: 2px 3px; border: 1px solid #a4b1c2; border-radius: 3px; background: linear-gradient(#eaf1f9, #fff 60%); }
.expr { font-family: "DejaVu Sans Mono", monospace; font-size: 9px; line-height: 11px; color: #555d68; }
.val { font-size: 16px; line-height: 18px; color: #111; }
.keys { display: grid; grid-template-columns: repeat(5, 1fr); grid-auto-rows: 19px; gap: 4px; margin: 0 7px; }
.keys button { min-width: 0; border: 1px solid #a5b3c6; border-radius: 2px; background: linear-gradient(#e3ebf5, #cfdae8); color: #3b4a60; }
.keys .n { font-size: 12px; background: linear-gradient(#fbfcfe, #e8eff7); color: #2d3a50; }
.keys .hot { background: radial-gradient(#ffe48a, #f6b53e); border-color: #c9a14f; }
.keys .warmkey { background: linear-gradient(#fde8b4, #fbe9d5 50%, #fbd98a); border-color: #d4bd8a; }
.keys .eq { grid-row: span 2; font-size: 16px; color: #111; }
.keys .zero { grid-column: span 2; color: #2d3f94; }
.back { width: 13px; height: 6px; }
.cursor { position: absolute; left: 69px; top: 158px; width: 10px; height: 15px; }

/* logo overlay */
.watermark { position: absolute; right: 12px; bottom: 0; display: flex; align-items: center; gap: 5px; color: #8e969b; }
.mark { width: 58px; height: 61px; }
.wtext { width: 179px; padding-top: 5px; }
.cn { font-family: "Noto Sans CJK SC", sans-serif; font-size: 30px; line-height: 28px; font-weight: 700; text-align: justify; text-align-last: justify; }
.url { font-size: 17px; line-height: 20px; text-align: center; font-family: "DejaVu Sans", sans-serif; }

/* command line */
.cmdline { position: absolute; left: 21%; width: 58%; bottom: 0; height: 18px; display: flex; align-items: center; background: linear-gradient(#5b6064, #3f4346); border: 1px solid #777; border-bottom: 0; color: #d0d0d0; }
.cmdline button { width: 16px; }
.cmdline .i { width: 10px; height: 10px; }
.grip { width: 4px; height: 12px; margin: 0 2px; background: repeating-linear-gradient(#999 0 1px, transparent 1px 3px); }
.cmdbox { flex: 1; align-self: stretch; display: flex; align-items: center; gap: 3px; padding: 0 3px; background: #b9bbbd; }
.cmdbox input { flex: 1; min-width: 0; padding-left: 3px; font-size: 10px; color: #333; }
.cmdbox input::placeholder { color: #686b6e; opacity: 1; }
.prompt { width: 12px; height: 10px; }
.dark { fill: #444; }
.up { width: 5px; height: 4px; align-self: flex-start; margin-top: 6px; }

/* status bar */
.status { display: flex; height: 20px; flex: none; background: #383838; font-size: 10px; }
.layouts { flex: 1; min-width: 0; display: flex; padding-left: 8px; align-items: flex-start; border-top: 1px solid #555; }
.layouts button { width: 39px; height: 13px; background: #4f4f4f; color: #bbb; clip-path: polygon(0 0, 100% 0, calc(100% - 5px) 100%, 5px 100%); }
.layouts button.on { background: #808080; color: #fff; font-weight: 700; }
.layouts .ladd { width: 20px; margin-left: 3px; font-weight: 700; }
.tray { display: flex; align-items: center; background: #4d4d4d; border-left: 1px solid #777; border-top: 1px solid #666; }
.coords { width: 140px; text-align: center; white-space: nowrap; font-size: 9px; color: #b5b5b5; border-right: 1px solid #6a6a6a; }
.model { width: 23px; font-size: 9px; font-weight: 700; color: #fff; }
.s { width: 18px; height: 16px; }
.s.sep { border-left: 1px solid #6a6a6a; }
.s.l { width: 20px; }
.c { width: 14px; display: flex; justify-content: center; }
.blue { color: #2e7bd8; }
.zoom { width: 48px; font-size: 9px; }
.units { display: flex; align-items: center; width: 58px; padding: 0 4px; color: #fff; font-size: 9px; font-weight: 700; }
.units select { flex: 1; min-width: 0; }

/* input method bar */
.ime { position: absolute; right: 240px; bottom: 11px; height: 17px; display: flex; align-items: center; gap: 5px; padding: 0 3px 0 23px; background: #fff; color: #1c68b8; }
.ime button { font-size: 11px; font-weight: 700; }
.ime .i { width: 12px; height: 12px; }
.sogou { position: absolute; left: -2px; top: -3px; width: 22px; height: 22px; }
```
